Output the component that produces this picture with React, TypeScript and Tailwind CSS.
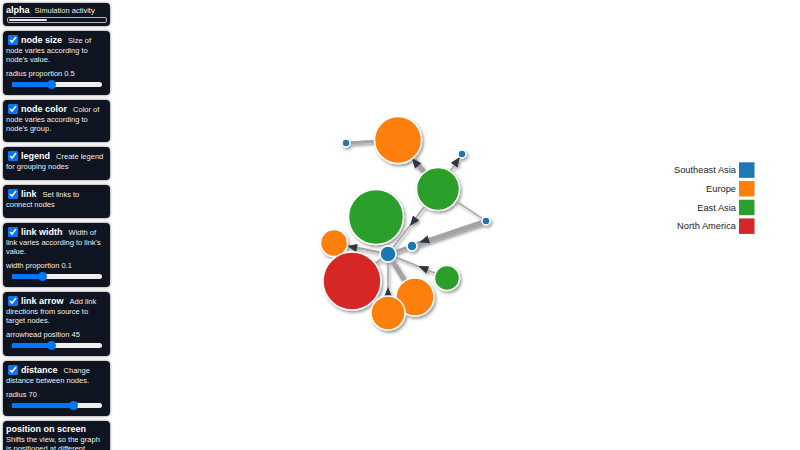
import React from "react";

type Node = { id: string; x: number; y: number; r: number; c: string };
type Link = { s: string; t: string; w: number; arrow?: [number, number] };

const BLUE = "#1f77b4";
const ORANGE = "#ff7f0e";
const GREEN = "#2ca02c";
const RED = "#d62728";

const nodes: Node[] = [
  { id: "a", x: 346, y: 143, r: 4, c: BLUE },
  { id: "b", x: 398, y: 140, r: 23.5, c: ORANGE },
  { id: "c", x: 462, y: 154, r: 4, c: BLUE },
  { id: "d", x: 438, y: 189, r: 21.5, c: GREEN },
  { id: "e", x: 376, y: 217, r: 27.5, c: GREEN },
  { id: "f", x: 486, y: 221, r: 4, c: BLUE },
  { id: "g", x: 334, y: 243, r: 13.5, c: ORANGE },
  { id: "h", x: 412, y: 246, r: 5, c: BLUE },
  { id: "i", x: 388, y: 254, r: 8, c: BLUE },
  { id: "j", x: 352, y: 281, r: 29, c: RED },
  { id: "k", x: 447, y: 278, r: 12.5, c: GREEN },
  { id: "l", x: 415, y: 297, r: 19, c: ORANGE },
  { id: "m", x: 388, y: 313, r: 17, c: ORANGE },
];

// arrow = where the arrowhead sits on the link, pointing from s to t
const links: Link[] = [
  { s: "a", t: "b", w: 3 },
  { s: "d", t: "b", w: 5, arrow: [415, 162] },
  { s: "d", t: "c", w: 1.5, arrow: [457, 161] },
  { s: "d", t: "f", w: 1.5 },
  { s: "d", t: "i", w: 1.5, arrow: [413, 222] },
  { s: "f", t: "h", w: 5, arrow: [424, 241] },
  { s: "i", t: "h", w: 3 },
  { s: "i", t: "g", w: 2, arrow: [352, 247] },
  { s: "i", t: "j", w: 2 },
  { s: "k", t: "i", w: 1.5, arrow: [423, 268] },
  { s: "i", t: "l", w: 5 },
  { s: "m", t: "i", w: 1.5, arrow: [388, 292] },
];

const byId = (id: string) => nodes.find((n) => n.id === id)!;

function arrowPoints(s: Node, t: Node, p: [number, number]) {
  const dx = t.x - s.x;
  const dy = t.y - s.y;
  const len = Math.hypot(dx, dy);
  const ux = dx / len;
  const uy = dy / len;
  const tip = [p[0] + ux * 5, p[1] + uy * 5];
  const b1 = [p[0] - ux * 5 - uy * 4, p[1] - uy * 5 + ux * 4];
  const b2 = [p[0] - ux * 5 + uy * 4, p[1] - uy * 5 - ux * 4];
  return [tip, b1, b2].map((q) => q.join(",")).join(" ");
}

function Slider({ pct }: { pct: number }) {
  return (
    <div className="relative ml-[6px] flex h-[11px] w-[90px] items-center">
      <div className="flex h-[5px] w-full overflow-hidden rounded-full bg-[#efefef]">
        <div className="h-full bg-[#0075ff]" style={{ width: `${pct}%` }} />
      </div>
      <div
        className="absolute top-[1px] -ml-[4.5px] h-[9px] w-[9px] rounded-full bg-[#0075ff]"
        style={{ left: `${pct}%` }}
      />
    </div>
  );
}

function Card({
  title,
  desc,
  label,
  pct,
}: {
  title: string;
  desc: string;
  label?: string;
  pct?: number;
}) {
  return (
    <div className="w-[107px] shrink-0 rounded-[4px] bg-[#0f1520] px-[3px] pt-[4px] pb-[4px] text-white shadow-[0_0_3px_rgba(0,0,0,0.55)]">
      <p className="mb-[5px] text-[7.5px] leading-[9px] text-[#ececec]">
        <input
          type="checkbox"
          defaultChecked
          className="mr-[3px] ml-[2px] h-[10px] w-[10px] align-[-2px]"
        />
        <b className="text-[9px] leading-[11px] text-white">{title}</b>{" "}
        <span className="ml-[4px]">{desc}</span>
      </p>
      {label && (
        <>
          <div className="text-[7.5px] leading-[10px] text-[#ececec]">{label}</div>
          <Slider pct={pct ?? 50} />
          <div className="h-[1px]" />
        </>
      )}
    </div>
  );
}

export default function App() {
  return (
    <div className="flex h-[450px] w-[800px] overflow-hidden bg-white font-['Liberation_Sans',Arial,sans-serif]">
      <div className="flex w-[110px] shrink-0 flex-col gap-[5px] pt-[3px] pl-[3px]">
        <div className="w-[107px] shrink-0 rounded-[4px] bg-[#0f1520] px-[3px] pt-[2px] pb-[3px] text-white shadow-[0_0_3px_rgba(0,0,0,0.55)]">
          <div className="h-[11px] text-[7.5px] leading-[11px] text-[#ececec]">
            <b className="text-[9px] text-white">alpha</b>{" "}
            <span className="ml-[3px]">Simulation activity</span>
          </div>
          <div className="mt-[1px] ml-[1px] h-[6px] w-[100px] rounded-[2px] border border-[#b8b8b8] p-[1px]">
            <div className="h-full w-[40%] rounded-[1px] bg-[#ececec]" />
          </div>
        </div>
        <Card
          title="node size"
          desc="Size of node varies according to node's value."
          label="radius proportion 0.5"
          pct={44}
        />
        <Card title="node color" desc="Color of node varies according to node's group." />
        <Card title="legend" desc="Create legend for grouping nodes" />
        <Card title="link" desc="Set links to connect nodes" />
        <Card
          title="link width"
          desc="Width of link varies according to link's value."
          label="width proportion 0.1"
          pct={34}
        />
        <Card
          title="link arrow"
          desc="Add link directions from source to target nodes."
          label="arrowhead position 45"
          pct={44}
        />
        <Card title="distance" desc="Change distance between nodes." label="radius 70" pct={68} />
        <div className="w-[107px] shrink-0 rounded-[4px] bg-[#0f1520] px-[3px] pt-[3px] pb-[4px] text-white shadow-[0_0_3px_rgba(0,0,0,0.55)]">
          <div className="text-[9px] leading-[11px] font-bold">position on screen</div>
          <p className="text-[7.5px] leading-[9px] text-[#ececec]">
            Shifts the view, so the graph is positioned at different coordinates on screen.
          </p>
        </div>
      </div>

      <svg width={690} height={450} viewBox="110 0 690 450" className="shrink-0">
        <defs>
          <filter id="sh" x="-50%" y="-50%" width="200%" height="200%">
            <feDropShadow dx="1.5" dy="2" stdDeviation="1.5" floodColor="#000" floodOpacity="0.4" />
          </filter>
        </defs>
        <g filter="url(#sh)">
          {links.map((l, i) => {
            const s = byId(l.s);
            const t = byId(l.t);
            return (
              <line key={i} x1={s.x} y1={s.y} x2={t.x} y2={t.y} stroke="#a3a3a3" strokeWidth={l.w} />
            );
          })}
          {links.map((l, i) =>
            l.arrow ? (
              <polygon
                key={"a" + i}
                points={arrowPoints(byId(l.s), byId(l.t), l.arrow)}
                fill="#2f3640"
              />
            ) : null
          )}
          {nodes.map((n) => (
            <circle key={n.id} cx={n.x} cy={n.y} r={n.r} fill={n.c} stroke="#fff" strokeWidth={1.5} />
          ))}
        </g>

        <g fontFamily="'Liberation Sans', Arial, sans-serif" fontSize="9.3" fill="#222">
          {[
            ["Southeast Asia", BLUE],
            ["Europe", ORANGE],
            ["East Asia", GREEN],
            ["North America", RED],
          ].map(([name, c], i) => (
            <g key={name}>
              <text x={736} y={173.3 + i * 18.7} textAnchor="end">
                {name}
              </text>
              <rect x={739} y={162.3 + i * 18.7} width={15.5} height={15.5} fill={c} />
            </g>
          ))}
        </g>
      </svg>
    </div>
  );
}
